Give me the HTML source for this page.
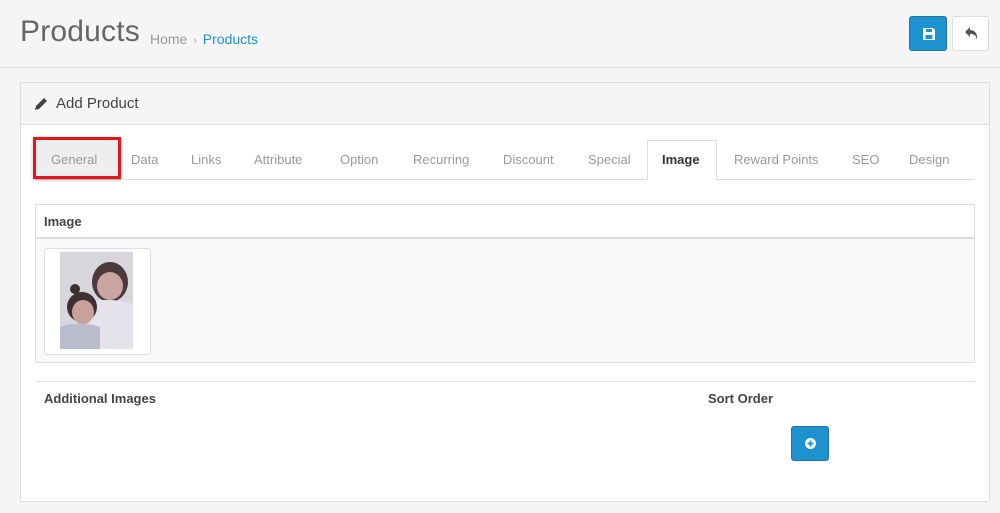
<!DOCTYPE html>
<html><head><meta charset="utf-8"><style>
*{box-sizing:border-box;margin:0;padding:0}
body{width:1000px;height:513px;background:#f5f5f5;font-family:"Liberation Sans",sans-serif;position:relative;overflow:hidden;color:#333}
.a{position:absolute}
.t{font-size:13px;color:#999}
</style></head><body>
<div class="a" style="left:0;top:67px;width:1000px;height:1px;background:#e4e4e4"></div>
<div class="a" style="left:20px;top:15px;font-size:30px;font-weight:300;color:#666;letter-spacing:0.2px">Products</div>
<div class="a" style="left:150px;top:31px;font-size:14px;color:#999;word-spacing:2px">Home <span style="font-size:11px;color:#aaa">›</span> <span style="color:#1e91cf;word-spacing:0">Products</span></div>
<div class="a" style="left:909px;top:16px;width:38px;height:35px;background:#1e91cf;border:1px solid #1978ab;border-radius:3px">
<svg class="a" style="left:13px;top:11px" width="12" height="12" viewBox="0 0 12 12"><path d="M0 0H10L12 2V12H0Z" fill="#fff"/><rect x="3" y="1" width="6" height="3" fill="#1e91cf"/><rect x="2.5" y="7" width="7" height="4" fill="#1e91cf"/></svg></div>
<div class="a" style="left:952px;top:16px;width:37px;height:35px;background:#fff;border:1px solid #ddd;border-radius:3px">
<svg class="a" style="left:12px;top:10px" width="14" height="13" viewBox="0 0 14 13"><path d="M5 0L0 5L5 10V7C9 7 11 8 12 13C13 7 10 3 5 3Z" fill="#555"/></svg></div>

<div class="a" style="left:20px;top:82px;width:970px;height:420px;background:#fff;border:1px solid #ddd"></div>
<div class="a" style="left:21px;top:83px;width:968px;height:42px;background:#f5f5f5;border-bottom:1px solid #ddd"></div>
<svg class="a" style="left:35px;top:97px" width="13" height="13" viewBox="0 0 13 13"><path d="M0 13L1 9L9 1L12 4L4 12Z" fill="#444"/></svg>
<div class="a" style="left:56px;top:95px;font-size:15px;color:#444">Add Product</div>

<div class="a" style="left:35px;top:179px;width:940px;height:1px;background:#ddd"></div>
<div class="a" style="left:36px;top:140px;width:82px;height:38px;background:#eee"></div>
<div class="a" style="left:33px;top:137px;width:88px;height:42px;border:3px solid #e8141a;box-shadow:0 1px 3px rgba(0,0,0,.3)"></div>
<div class="a" style="left:647px;top:140px;width:70px;height:40px;background:#fff;border:1px solid #ddd;border-bottom:none"></div>
<div class="a t" style="left:51px;top:152px">General</div>
<div class="a t" style="left:131px;top:152px">Data</div>
<div class="a t" style="left:191px;top:152px">Links</div>
<div class="a t" style="left:254px;top:152px">Attribute</div>
<div class="a t" style="left:340px;top:152px">Option</div>
<div class="a t" style="left:413px;top:152px">Recurring</div>
<div class="a t" style="left:503px;top:152px">Discount</div>
<div class="a t" style="left:588px;top:152px">Special</div>
<div class="a t" style="left:662px;top:152px;color:#333;font-weight:bold">Image</div>
<div class="a t" style="left:734px;top:152px">Reward Points</div>
<div class="a t" style="left:852px;top:152px">SEO</div>
<div class="a t" style="left:909px;top:152px">Design</div>

<div class="a" style="left:35px;top:204px;width:940px;height:159px;border:1px solid #ddd;background:#f9f9f9"></div>
<div class="a" style="left:36px;top:205px;width:938px;height:34px;background:#fff;border-bottom:2px solid #ddd"></div>
<div class="a" style="left:44px;top:214px;font-size:13px;font-weight:bold;color:#444">Image</div>
<div class="a" style="left:44px;top:248px;width:107px;height:107px;background:#fff;border:1px solid #ddd;border-radius:3px"></div>
<svg class="a" style="left:60px;top:252px" width="73" height="97" viewBox="0 0 73 97">
<rect width="73" height="97" fill="#d6d6dc"/>
<ellipse cx="50" cy="30" rx="18" ry="20" fill="#4a3a3a"/>
<ellipse cx="50" cy="34" rx="13" ry="14" fill="#c9a4a0"/>
<path d="M30 50Q50 45 73 52V97H30Z" fill="#e4e2ea"/>
<circle cx="15" cy="37" r="5" fill="#3a2e2e"/>
<ellipse cx="22" cy="55" rx="15" ry="15" fill="#3e3030"/>
<ellipse cx="23" cy="60" rx="11" ry="12" fill="#c8a09c"/>
<path d="M0 75Q20 68 40 75V97H0Z" fill="#b8bccc"/>
</svg>

<div class="a" style="left:35px;top:381px;width:940px;height:1px;background:#ddd"></div>
<div class="a" style="left:44px;top:391px;font-size:13px;font-weight:bold;color:#444">Additional Images</div>
<div class="a" style="left:708px;top:391px;font-size:13px;font-weight:bold;color:#444">Sort Order</div>
<div class="a" style="left:791px;top:426px;width:38px;height:35px;background:#1e91cf;border:1px solid #1978ab;border-radius:3px">
<svg class="a" style="left:13px;top:11px" width="11" height="11" viewBox="0 0 11 11"><circle cx="5.5" cy="5.5" r="5.5" fill="#fff"/><path d="M5.5 2.5V8.5M2.5 5.5H8.5" stroke="#1e91cf" stroke-width="1.8"/></svg></div>
</body></html>
